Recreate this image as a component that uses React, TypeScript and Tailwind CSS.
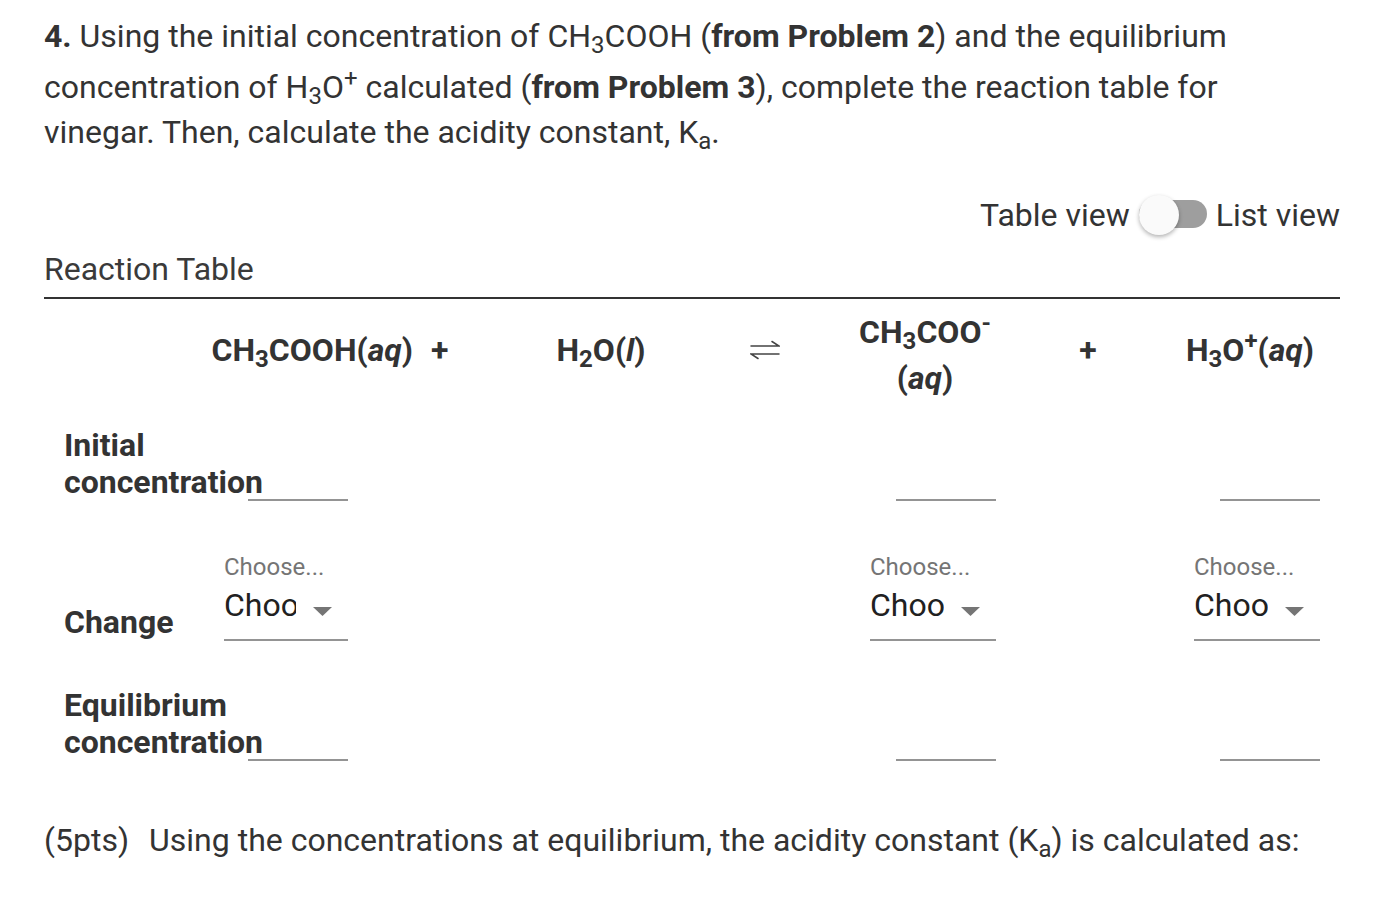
import React from "react";

function Arrow() {
  return (
    <svg width="30" height="20" viewBox="0 0 30 20" fill="none" stroke="#444" strokeWidth="1.5" strokeLinecap="round">
      <path d="M1 6H29L22 1.5" />
      <path d="M29 14H1L8 18.5" />
    </svg>
  );
}

function Blank() {
  return <div className="justify-self-end w-[100px] h-[2px] bg-[#949494]" />;
}

function Select() {
  return (
    <div className="flex flex-col w-full pb-[14px] border-b-2 border-[#949494]">
      <span className="text-[24px] leading-[24px] text-[#757575]">Choose...</span>
      <div className="flex items-center mt-[6px] h-[40px]">
        <span className="flex-1 min-w-0 overflow-hidden whitespace-nowrap text-[32px] leading-[40px] text-[#212121]">
          Choose...
        </span>
        <span className="w-[52px] flex justify-end pr-[16px] mt-[12px]">
          <svg width="19" height="9" viewBox="0 0 19 9">
            <path d="M0 0H19L9.5 9Z" fill="#757575" />
          </svg>
        </span>
      </div>
    </div>
  );
}

const rowCols = "grid grid-cols-[180px_124px_522px_126px_198px_126px_20px] items-end";

export default function App() {
  return (
    <div className="w-full min-h-screen bg-white font-[Roboto,sans-serif] text-[#333] pl-[44px] pr-[38px] pt-[14px]">
      {/* Question */}
      <p className="max-w-[1230px] text-[32px] leading-[45px]">
        <b>4.</b> Using the initial concentration of CH<sub>3</sub>COOH (<b>from Problem 2</b>) and the equilibrium
        concentration of H<sub>3</sub>O<sup className="leading-[45px] align-[9px] top-[-3px]">+</sup> calculated (
        <b>from Problem 3</b>), complete the reaction table for vinegar. Then, calculate the acidity constant, K
        <sub>a</sub>.
      </p>

      {/* View toggle */}
      <div className="flex items-center justify-end h-[40px] mt-[40px] text-[32px]">
        <span>Table view</span>
        <div className="relative ml-[9px] w-[68px] h-[40px]">
          <div className="absolute left-0 right-0 top-[5px] h-[28px] rounded-full bg-[#9e9e9e]" />
          <div className="absolute left-0 top-0 w-[40px] h-[40px] rounded-full bg-[#fafafa] shadow-[0_2px_4px_rgba(0,0,0,0.3)]" />
        </div>
        <span className="ml-[9px]">List view</span>
      </div>

      <div className="mt-[16px] text-[32px] leading-[36px] text-[#3a3a3a]">Reaction Table</div>
      <div className="mt-[10px] h-[2px] bg-[#333]" />

      {/* Equation header */}
      <div className="flex items-center h-[92px] mt-[10px] text-[32px] leading-[46px] font-bold">
        <div className="w-[156px]" />
        <div className="w-[260px] text-center mb-[10px] whitespace-nowrap">
          CH<sub>3</sub>COOH(<i>aq</i>)<span className="ml-[18px]">+</span>
        </div>
        <div className="ml-[81px] w-[120px] text-center mb-[10px] whitespace-nowrap">
          H<sub>2</sub>O(<i>l</i>)
        </div>
        <div className="ml-[74px] w-[60px] flex justify-center mb-[10px]">
          <Arrow />
        </div>
        <div className="ml-[50px] w-[160px] text-center">
          CH<sub>3</sub>COO<sup>-</sup>
          <br />
          (<i>aq</i>)
        </div>
        <div className="ml-[63px] w-[40px] text-center mb-[10px]">+</div>
        <div className="ml-[62px] w-[160px] text-center mb-[10px] whitespace-nowrap">
          H<sub>3</sub>O<sup>+</sup>(<i>aq</i>)
        </div>
      </div>

      {/* Initial */}
      <div className={`${rowCols} mt-[26px]`}>
        <div className="pl-[20px] text-[32px] leading-[37px] font-bold whitespace-nowrap">
          Initial
          <br />
          concentration
        </div>
        <Blank />
        <div />
        <Blank />
        <div />
        <Blank />
      </div>

      {/* Change */}
      <div className={`${rowCols} mt-[54px]`}>
        <div className="pl-[20px] text-[32px] leading-[37px] font-bold">Change</div>
        <Select />
        <div />
        <Select />
        <div />
        <Select />
      </div>

      {/* Equilibrium */}
      <div className={`${rowCols} mt-[46px]`}>
        <div className="pl-[20px] text-[32px] leading-[37px] font-bold whitespace-nowrap">
          Equilibrium
          <br />
          concentration
        </div>
        <Blank />
        <div />
        <Blank />
        <div />
        <Blank />
      </div>

      <p className="mt-[59px] text-[32px] leading-[40px]">
        <span className="mr-[20px]">(5pts)</span>Using the concentrations at equilibrium, the acidity constant (K
        <sub>a</sub>) is calculated as:
      </p>
    </div>
  );
}
